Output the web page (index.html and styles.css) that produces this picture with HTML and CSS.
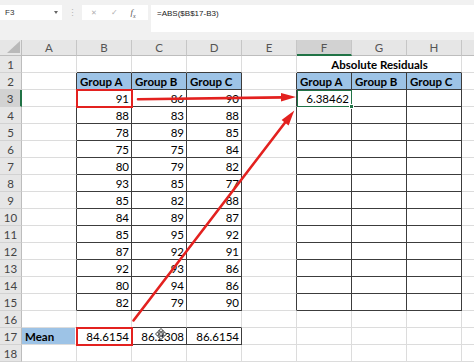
FILE: index.html
```html
<!DOCTYPE html>
<html>
<head>
<meta charset="utf-8">
<link rel="stylesheet" href="styles.css">
</head>
<body>
<div class="app">
  <div class="toolbar">
    <div class="namebox"><span>F3</span><span class="caret"></span></div>
    <div class="dots">⋮</div>
    <div class="fxbox">
      <span class="x">✕</span><span class="ok">✓</span><span class="fx">f<sub>x</sub></span>
    </div>
    <div class="formula">=ABS($B$17-B3)</div>
  </div>
  <div class="sheet">
    <div class="corner"><svg width="13" height="12" viewBox="0 0 13 12"><polygon points="13,0 13,12 0,12" fill="#b9b9b9"/></svg></div>
    <div class="ch">A</div><div class="ch">B</div><div class="ch">C</div><div class="ch">D</div><div class="ch">E</div><div class="ch selh">F</div><div class="ch">G</div><div class="ch">H</div><div class="ch last"></div>

    <div class="rh">1</div><div></div><div class="db"></div><div class="db"></div><div class="db"></div><div></div><div class="title db">Absolute Residuals</div><div class="last"></div>

    <div class="rh">2</div><div class="dr"></div><div class="hd dr db">Group A</div><div class="hd dr db">Group B</div><div class="hd dr db">Group C</div><div class="dr"></div><div class="hd dr db">Group A</div><div class="hd dr db">Group B</div><div class="hd dr db">Group C</div><div class="last"></div>

    <div class="rh selr">3</div><div class="dr"></div><div class="n dr db box">91</div><div class="n dr db">86</div><div class="n dr db">90</div><div class="dr"></div><div class="n dr db cur">6.38462</div><div class="dr db"></div><div class="dr db"></div><div class="last"></div>

    <div class="rh">4</div><div class="dr"></div><div class="n dr db">88</div><div class="n dr db">83</div><div class="n dr db">88</div><div class="dr"></div><div class="dr db"></div><div class="dr db"></div><div class="dr db"></div><div class="last"></div>

    <div class="rh">5</div><div class="dr"></div><div class="n dr db">78</div><div class="n dr db">89</div><div class="n dr db">85</div><div class="dr"></div><div class="dr db"></div><div class="dr db"></div><div class="dr db"></div><div class="last"></div>

    <div class="rh">6</div><div class="dr"></div><div class="n dr db">75</div><div class="n dr db">75</div><div class="n dr db">84</div><div class="dr"></div><div class="dr db"></div><div class="dr db"></div><div class="dr db"></div><div class="last"></div>

    <div class="rh">7</div><div class="dr"></div><div class="n dr db">80</div><div class="n dr db">79</div><div class="n dr db">82</div><div class="dr"></div><div class="dr db"></div><div class="dr db"></div><div class="dr db"></div><div class="last"></div>

    <div class="rh">8</div><div class="dr"></div><div class="n dr db">93</div><div class="n dr db">85</div><div class="n dr db">77</div><div class="dr"></div><div class="dr db"></div><div class="dr db"></div><div class="dr db"></div><div class="last"></div>

    <div class="rh">9</div><div class="dr"></div><div class="n dr db">85</div><div class="n dr db">82</div><div class="n dr db">88</div><div class="dr"></div><div class="dr db"></div><div class="dr db"></div><div class="dr db"></div><div class="last"></div>

    <div class="rh">10</div><div class="dr"></div><div class="n dr db">84</div><div class="n dr db">89</div><div class="n dr db">87</div><div class="dr"></div><div class="dr db"></div><div class="dr db"></div><div class="dr db"></div><div class="last"></div>

    <div class="rh">11</div><div class="dr"></div><div class="n dr db">85</div><div class="n dr db">95</div><div class="n dr db">92</div><div class="dr"></div><div class="dr db"></div><div class="dr db"></div><div class="dr db"></div><div class="last"></div>

    <div class="rh">12</div><div class="dr"></div><div class="n dr db">87</div><div class="n dr db">92</div><div class="n dr db">91</div><div class="dr"></div><div class="dr db"></div><div class="dr db"></div><div class="dr db"></div><div class="last"></div>

    <div class="rh">13</div><div class="dr"></div><div class="n dr db">92</div><div class="n dr db">93</div><div class="n dr db">86</div><div class="dr"></div><div class="dr db"></div><div class="dr db"></div><div class="dr db"></div><div class="last"></div>

    <div class="rh">14</div><div class="dr"></div><div class="n dr db">80</div><div class="n dr db">94</div><div class="n dr db">86</div><div class="dr"></div><div class="dr db"></div><div class="dr db"></div><div class="dr db"></div><div class="last"></div>

    <div class="rh">15</div><div class="dr"></div><div class="n dr db">82</div><div class="n dr db">79</div><div class="n dr db">90</div><div class="dr"></div><div class="dr db"></div><div class="dr db"></div><div class="dr db"></div><div class="last"></div>

    <div class="rh">16</div><div></div><div class="db"></div><div class="db"></div><div class="db"></div><div></div><div></div><div></div><div></div><div class="last"></div>

    <div class="rh">17</div><div class="hd mean">Mean</div><div class="n dr db box">84.6154</div><div class="n dr db">86.2308</div><div class="n dr db">86.6154</div><div></div><div></div><div></div><div></div><div class="last"></div>

    <div class="rh">18</div><div></div><div></div><div></div><div></div><div></div><div></div><div></div><div></div><div class="last"></div>
  </div>
  <svg class="overlay" width="474" height="363" viewBox="0 0 474 363">
    <g stroke="#e3211f" stroke-width="2.6" stroke-linecap="round">
      <line x1="138" y1="99.3" x2="283" y2="97.4"/>
      <line x1="133.5" y1="320.5" x2="285.5" y2="122"/>
    </g>
    <g fill="#e3211f">
      <polygon points="296,97.1 281,92.9 281,101.6"/>
      <polygon points="294.3,110.5 288.6,125.4 281.6,120.1"/>
    </g>
    <path transform="translate(155.5,328.5)" d="M5.5 0 L8 2.5 L6.3 2.5 L6.3 4.7 L8.5 4.7 L8.5 3 L11 5.5 L8.5 8 L8.5 6.3 L6.3 6.3 L6.3 8.5 L8 8.5 L5.5 11 L3 8.5 L4.7 8.5 L4.7 6.3 L2.5 6.3 L2.5 8 L0 5.5 L2.5 3 L2.5 4.7 L4.7 4.7 L4.7 2.5 L3 2.5 Z" fill="#fff" stroke="#111" stroke-width="0.8" stroke-linejoin="round"/>
  </svg>
</div>
</body>
</html>
```

FILE: styles.css
```css
html, body {
  margin: 0;
  padding: 0;
  background: #fff;
}

.app {
  position: relative;
  width: 474px;
  height: 363px;
  overflow: hidden;
}

.toolbar {
  display: flex;
  align-items: flex-start;
  height: 40px;
  box-sizing: border-box;
  padding-top: 5px;
  background: #f1f1f1;
  font-family: "Liberation Sans", Arial, sans-serif;
  font-size: 8px;
  color: #333;
}

.namebox {
  width: 62px;
  height: 15px;
  box-sizing: border-box;
  background: #fff;
  display: flex;
  align-items: center;
  justify-content: space-between;
  padding: 0 4px 0 5px;
}

.caret {
  width: 0;
  height: 0;
  border-left: 2.5px solid transparent;
  border-right: 2.5px solid transparent;
  border-top: 3px solid #666;
}

.dots {
  width: 20px;
  height: 15px;
  display: flex;
  align-items: center;
  justify-content: center;
  color: #b4b4b4;
  font-size: 9px;
}

.fxbox {
  width: 66px;
  height: 15px;
  background: #fff;
  display: flex;
  align-items: center;
  font-family: "DejaVu Sans", sans-serif;
}

.fxbox .x {
  margin-left: 9px;
  color: #b0b0b0;
  font-size: 7px;
}

.fxbox .ok {
  margin-left: 14px;
  color: #b0b0b0;
  font-size: 8px;
}

.fxbox .fx {
  margin-left: 13px;
  color: #555;
  font-family: "Liberation Serif", serif;
  font-style: italic;
  font-size: 9px;
}

.fxbox .fx sub {
  font-size: 6px;
}

.formula {
  margin-left: 3px;
  flex: 1;
  height: 27px;
  box-sizing: border-box;
  background: #fff;
  padding: 3px 6px 0 6px;
  line-height: 12px;
  color: #222;
}

.sheet {
  display: grid;
  grid-template-columns: 22px repeat(8, 55px) 1fr;
  grid-template-rows: 16px repeat(18, 17px);
}

.sheet > div {
  box-sizing: border-box;
  border-right: 1px solid #dcdcdc;
  border-bottom: 1px solid #dcdcdc;
  font-family: Lato, "Liberation Sans", sans-serif;
  font-size: 11.5px;
  color: #000;
  display: flex;
  align-items: center;
  padding: 0 2px 0 3px;
  white-space: nowrap;
  overflow: hidden;
}

.sheet > .last {
  border-right: none;
}

.sheet > .corner {
  background: #e6e6e6;
  border-right-color: #bdbdbd;
  border-bottom-color: #bdbdbd;
  align-items: flex-end;
  justify-content: flex-end;
  padding: 0 1px 2px 0;
}

.sheet > .ch {
  background: #e6e6e6;
  justify-content: center;
  color: #555;
  border-right-color: #c6c6c6;
  border-bottom-color: #bdbdbd;
  padding: 0;
}

.sheet > .ch.selh {
  background: #d2d2d2;
  border-bottom: 2px solid #217346;
}

.sheet > .rh {
  background: #e6e6e6;
  justify-content: center;
  color: #444;
  border-right-color: #bdbdbd;
  border-bottom-color: #d2d2d2;
  padding: 0;
}

.sheet > .rh.selr {
  background: #d2d2d2;
  border-right: 2px solid #217346;
}

.sheet > .n {
  justify-content: flex-end;
}

.sheet > .dr {
  border-right-color: #3c3c3c;
}

.sheet > .db {
  border-bottom-color: #3c3c3c;
}

.sheet > .hd {
  background: #9dc3e6;
  font-weight: 700;
}

.sheet > .title {
  grid-column: span 3;
  justify-content: center;
  font-weight: 700;
}

.sheet > .mean {
  border-right: 2px solid #fff;
}

.sheet > .box {
  position: relative;
  z-index: 2;
  outline: 2px solid #e3211f;
  outline-offset: -1px;
}

.sheet > .cur {
  position: relative;
  z-index: 3;
  overflow: visible;
  outline: 1.5px solid #217346;
  outline-offset: -1px;
}

.sheet > .cur::after {
  content: "";
  position: absolute;
  right: -3px;
  bottom: -3px;
  width: 3px;
  height: 3px;
  background: #217346;
  border: 1px solid #fff;
}

.overlay {
  position: absolute;
  left: 0;
  top: 0;
  pointer-events: none;
  z-index: 5;
}
```
